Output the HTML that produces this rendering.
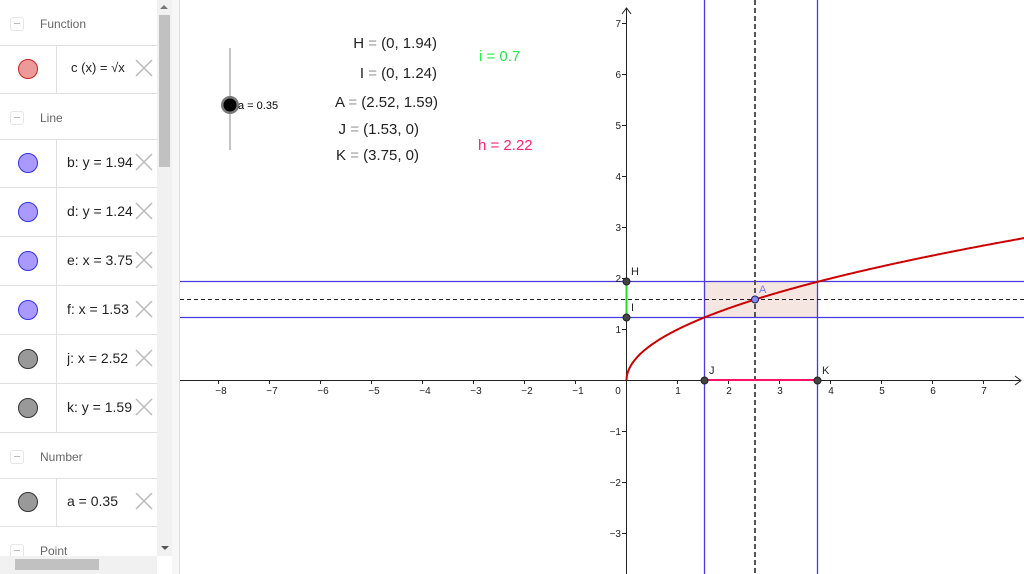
<!DOCTYPE html>
<html><head><meta charset="utf-8"><style>
body{margin:0;width:1024px;height:574px;overflow:hidden;background:#fff;font-family:"Liberation Sans",sans-serif;position:relative}
.p{position:absolute;left:0;top:0;width:157px;height:556px;overflow:hidden}
.h{position:absolute;left:0;width:157px;height:45px;border-bottom:1px solid #e0e0e0;font-size:12px;color:#666}
.h span.t{position:absolute;left:40px;top:17px}
.h span.m{position:absolute;left:10px;top:17px;width:12px;height:12px;border:1px solid #e6e6e6;border-radius:3px}
.h span.m:after{content:"";position:absolute;left:3px;top:5px;width:6px;height:1px;background:#bbb}
.r{position:absolute;left:0;width:157px;height:48px;border-bottom:1px solid #e0e0e0}
.r .d{position:absolute;left:18px;top:14px;width:18px;height:18px;border-radius:50%;border:1px solid}
.r .v{position:absolute;left:56px;top:0;bottom:0;border-left:1px solid #e0e0e0}
.r .x{position:absolute;left:67px;top:15px;font-size:14px;color:#222;white-space:nowrap;width:80px;overflow:hidden}
.r svg{position:absolute;left:135px;top:14px}
</style></head><body>
<div class="p">
<div class="h" style="top:0"><span class="m"></span><span class="t">Function</span></div>
<div class="r" style="top:45px"><div class="d" style="background:#e99;border-color:#c22"></div><div class="v"></div><div class="x" style="font-size:13px;left:71px">c (x) = √x</div><svg width="18" height="18"><path d="M1 1L17 17M17 1L1 17" stroke="#bbb" stroke-width="1.5"/></svg></div>
<div class="h" style="top:94px"><span class="m"></span><span class="t">Line</span></div>
<div class="r" style="top:139px"><div class="d" style="background:#a9f;border-color:#33e"></div><div class="v"></div><div class="x">b: y = 1.94</div><svg width="18" height="18"><path d="M1 1L17 17M17 1L1 17" stroke="#bbb" stroke-width="1.5"/></svg></div>
<div class="r" style="top:188px"><div class="d" style="background:#a9f;border-color:#33e"></div><div class="v"></div><div class="x">d: y = 1.24</div><svg width="18" height="18"><path d="M1 1L17 17M17 1L1 17" stroke="#bbb" stroke-width="1.5"/></svg></div>
<div class="r" style="top:237px"><div class="d" style="background:#a9f;border-color:#33e"></div><div class="v"></div><div class="x">e: x = 3.75</div><svg width="18" height="18"><path d="M1 1L17 17M17 1L1 17" stroke="#bbb" stroke-width="1.5"/></svg></div>
<div class="r" style="top:286px"><div class="d" style="background:#a9f;border-color:#33e"></div><div class="v"></div><div class="x">f: x = 1.53</div><svg width="18" height="18"><path d="M1 1L17 17M17 1L1 17" stroke="#bbb" stroke-width="1.5"/></svg></div>
<div class="r" style="top:335px"><div class="d" style="background:#999;border-color:#333"></div><div class="v"></div><div class="x">j: x = 2.52</div><svg width="18" height="18"><path d="M1 1L17 17M17 1L1 17" stroke="#bbb" stroke-width="1.5"/></svg></div>
<div class="r" style="top:384px"><div class="d" style="background:#999;border-color:#333"></div><div class="v"></div><div class="x">k: y = 1.59</div><svg width="18" height="18"><path d="M1 1L17 17M17 1L1 17" stroke="#bbb" stroke-width="1.5"/></svg></div>
<div class="h" style="top:433px"><span class="m"></span><span class="t">Number</span></div>
<div class="r" style="top:478px"><div class="d" style="background:#999;border-color:#333"></div><div class="v"></div><div class="x">a = 0.35</div><svg width="18" height="18"><path d="M1 1L17 17M17 1L1 17" stroke="#bbb" stroke-width="1.5"/></svg></div>
<div class="h" style="top:527px"><span class="m"></span><span class="t">Point</span></div>
</div>
<div style="position:absolute;left:157px;top:0;width:15px;height:556px;background:#f1f1f1"></div>
<div style="position:absolute;left:159px;top:15px;width:11px;height:152px;background:#c1c1c1"></div>
<div style="position:absolute;left:160px;top:5px;width:0;height:0;border:4px solid transparent;border-bottom:4px solid #777;border-top:0"></div>
<div style="position:absolute;left:161px;top:546px;width:0;height:0;border:4px solid transparent;border-top:4px solid #555;border-bottom:0"></div>
<div style="position:absolute;left:0;top:556px;width:157px;height:18px;background:#f1f1f1"></div>
<div style="position:absolute;left:15px;top:559px;width:84px;height:11px;background:#c1c1c1"></div>
<div style="position:absolute;left:172px;top:0;width:7px;height:574px;background:#f7f7f7;border-right:1px solid #ddd"></div>
<svg style="position:absolute;left:0;top:0" width="1024" height="574" font-family="Liberation Sans, sans-serif">
<rect x="704" y="281" width="114" height="37" fill="#f5e6e1"/>
<g stroke="#4a3be0" stroke-width="1.3">
<line x1="180" y1="281.5" x2="1024" y2="281.5"/>
<line x1="180" y1="317.5" x2="1024" y2="317.5"/>
<line x1="704.5" y1="0" x2="704.5" y2="574"/>
<line x1="817.5" y1="0" x2="817.5" y2="574"/>
</g>
<line x1="180" y1="299.5" x2="1024" y2="299.5" stroke="#222" stroke-dasharray="4,3"/>
<line x1="755" y1="0" x2="755" y2="574" stroke="#555" stroke-width="2" stroke-dasharray="5,3"/>
<line x1="180" y1="380.5" x2="1020" y2="380.5" stroke="#222"/>
<path d="M1015 376L1021 380.5L1015 385" fill="none" stroke="#222"/>
<line x1="626.5" y1="574" x2="626.5" y2="8" stroke="#222"/>
<path d="M622 14L626.5 8L631 14" fill="none" stroke="#222"/>
<g stroke="#222">
<path d="M218.5 380v4M269.5 380v4M320.5 380v4M371.5 380v4M422.5 380v4M473.5 380v4M524.5 380v4M575.5 380v4M677.5 380v4M728.5 380v4M779.5 380v4M830.5 380v4M881.5 380v4M932.5 380v4M983.5 380v4"/>
<path d="M622 23.5h4M622 74.5h4M622 125.5h4M622 176.5h4M622 227.5h4M622 278.5h4M622 329.5h4M622 431.5h4M622 482.5h4M622 533.5h4"/>
</g>
<g font-size="10" fill="#222" text-anchor="middle">
<text x="221" y="394">−8</text><text x="272" y="394">−7</text><text x="323" y="394">−6</text><text x="374" y="394">−5</text><text x="425" y="394">−4</text><text x="476" y="394">−3</text><text x="527" y="394">−2</text><text x="578" y="394">−1</text><text x="618" y="394">0</text>
<text x="678" y="394">1</text><text x="729" y="394">2</text><text x="780" y="394">3</text><text x="831" y="394">4</text><text x="882" y="394">5</text><text x="933" y="394">6</text><text x="984" y="394">7</text>
</g>
<g font-size="10" fill="#222" text-anchor="end">
<text x="621" y="27">7</text><text x="621" y="78">6</text><text x="621" y="129">5</text><text x="621" y="180">4</text><text x="621" y="231">3</text><text x="621" y="282">2</text><text x="621" y="333">1</text><text x="621" y="435">−1</text><text x="621" y="486">−2</text><text x="621" y="537">−3</text>
</g>
<path id="c" d="" fill="none" stroke="#cc0000" stroke-width="2"/>
<line x1="626.5" y1="281" x2="626.5" y2="317" stroke="#22dd22" stroke-width="2"/>
<line x1="704" y1="380" x2="817" y2="380" stroke="#ff1166" stroke-width="2"/>
<g fill="#444" stroke="#222"><circle cx="626.5" cy="281.5" r="3.5"/><circle cx="626.5" cy="317.5" r="3.5"/><circle cx="704.5" cy="380.5" r="3.5"/><circle cx="817.5" cy="380.5" r="3.5"/></g>
<circle cx="755" cy="299.5" r="3.5" fill="#88f" stroke="#224"/>
<g font-size="11" fill="#222"><text x="631" y="275">H</text><text x="631" y="311">I</text><text x="709" y="374">J</text><text x="822" y="374">K</text></g>
<text x="759" y="293" font-size="11" fill="#77f">A</text>
<line x1="230" y1="48" x2="230" y2="150" stroke="#888" stroke-width="1"/>
<circle cx="230" cy="105" r="9" fill="#777"/><circle cx="230" cy="105" r="6.5" fill="#000"/>
<text x="238" y="109" font-size="11" fill="#000">a = 0.35</text>
<g font-size="15" fill="#222" text-anchor="end">
<text x="437" y="48">H <tspan fill="#999">=</tspan> (0, 1.94)</text>
<text x="437" y="78">I <tspan fill="#999">=</tspan> (0, 1.24)</text>
<text x="438" y="107">A <tspan fill="#999">=</tspan> (2.52, 1.59)</text>
<text x="419" y="134">J <tspan fill="#999">=</tspan> (1.53, 0)</text>
<text x="419" y="160">K <tspan fill="#999">=</tspan> (3.75, 0)</text>
</g>
<text x="479" y="61" font-size="15" fill="#22ee44">i = 0.7</text>
<text x="478" y="150" font-size="15" fill="#ff2277">h = 2.22</text>
</svg>
<script>
var d="M626.5 380";for(var i=1;i<=400;i++){var x=Math.pow(i/400,2)*7.8;d+=" L"+(626.5+x*51).toFixed(1)+" "+(380.5-Math.sqrt(x)*51).toFixed(1);}
document.getElementById('c').setAttribute('d',d);
</script>
</body></html>
